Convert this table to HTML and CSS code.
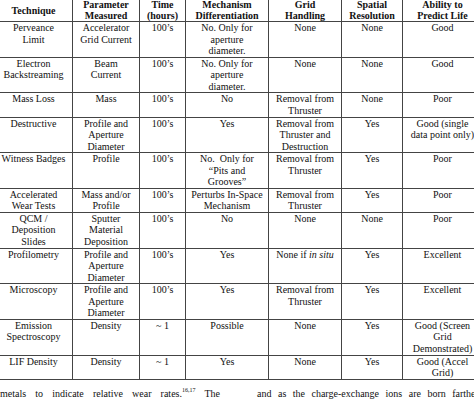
FILE: index.html
```html
<!DOCTYPE html>
<html>
<head>
<meta charset="utf-8">
<link rel="stylesheet" href="styles.css">
</head>
<body>
<div class="page">
  <table class="grid">
    <colgroup>
      <col class="c1"><col class="c2"><col class="c3"><col class="c4"><col class="c5"><col class="c6"><col class="c7">
    </colgroup>
    <thead>
      <tr>
        <th>Technique</th>
        <th>Parameter<br>Measured</th>
        <th>Time<br>(hours)</th>
        <th>Mechanism<br>Differentiation</th>
        <th>Grid<br>Handling</th>
        <th>Spatial<br>Resolution</th>
        <th>Ability to<br>Predict Life</th>
      </tr>
    </thead>
    <tbody>
      <tr>
        <td>Perveance<br>Limit</td>
        <td>Accelerator<br>Grid Current</td>
        <td>100’s</td>
        <td>No. Only for<br>aperture<br>diameter.</td>
        <td>None</td>
        <td>None</td>
        <td>Good</td>
      </tr>
      <tr>
        <td>Electron<br>Backstreaming</td>
        <td>Beam<br>Current</td>
        <td>100’s</td>
        <td>No. Only for<br>aperture<br>diameter.</td>
        <td>None</td>
        <td>None</td>
        <td>Good</td>
      </tr>
      <tr>
        <td>Mass Loss</td>
        <td>Mass</td>
        <td>100’s</td>
        <td>No</td>
        <td>Removal from<br>Thruster</td>
        <td>None</td>
        <td>Poor</td>
      </tr>
      <tr>
        <td>Destructive</td>
        <td>Profile and<br>Aperture<br>Diameter</td>
        <td>100’s</td>
        <td>Yes</td>
        <td>Removal from<br>Thruster and<br>Destruction</td>
        <td>Yes</td>
        <td>Good (single<br>data point only)</td>
      </tr>
      <tr>
        <td>Witness Badges</td>
        <td>Profile</td>
        <td>100’s</td>
        <td>No.&nbsp; Only for<br>“Pits and<br>Grooves”</td>
        <td>Removal from<br>Thruster</td>
        <td>Yes</td>
        <td>Poor</td>
      </tr>
      <tr>
        <td>Accelerated<br>Wear Tests</td>
        <td>Mass and/or<br>Profile</td>
        <td>100’s</td>
        <td>Perturbs In-Space<br>Mechanism</td>
        <td>Removal from<br>Thruster</td>
        <td>Yes</td>
        <td>Poor</td>
      </tr>
      <tr>
        <td>QCM /<br>Deposition<br>Slides</td>
        <td>Sputter<br>Material<br>Deposition</td>
        <td>100’s</td>
        <td>No</td>
        <td>None</td>
        <td>None</td>
        <td>Poor</td>
      </tr>
      <tr>
        <td>Profilometry</td>
        <td>Profile and<br>Aperture<br>Diameter</td>
        <td>100’s</td>
        <td>Yes</td>
        <td>None if <i>in situ</i></td>
        <td>Yes</td>
        <td>Excellent</td>
      </tr>
      <tr>
        <td>Microscopy</td>
        <td>Profile and<br>Aperture<br>Diameter</td>
        <td>100’s</td>
        <td>Yes</td>
        <td>Removal from<br>Thruster</td>
        <td>Yes</td>
        <td>Excellent</td>
      </tr>
      <tr>
        <td>Emission<br>Spectroscopy</td>
        <td>Density</td>
        <td>~ 1</td>
        <td>Possible</td>
        <td>None</td>
        <td>Yes</td>
        <td>Good (Screen<br>Grid<br>Demonstrated)</td>
      </tr>
      <tr>
        <td>LIF Density</td>
        <td>Density</td>
        <td>~ 1</td>
        <td>Yes</td>
        <td>None</td>
        <td>Yes</td>
        <td>Good (Accel<br>Grid)</td>
      </tr>
    </tbody>
  </table>
  <div class="text">
    <p class="col-left">metals to indicate relative wear rates.<sup>16,17</sup> The</p>
    <p class="col-right">and as the charge-exchange ions are born farther</p>
  </div>
</div>
</body>
</html>
```

FILE: styles.css
```css
html, body {
  margin: 0;
  padding: 0;
  background: #ffffff;
}

.page {
  width: 474px;
  height: 402px;
  overflow: hidden;
  font-family: "Liberation Serif", "Times New Roman", serif;
  color: #111111;
  font-size: 10px;
}

.grid {
  border-collapse: collapse;
  table-layout: fixed;
  width: 488px;
  margin-left: -6px;
  margin-top: -2px;
}

.c1 { width: 78px; }
.c2 { width: 67px; }
.c3 { width: 46px; }
.c4 { width: 83px; }
.c5 { width: 73px; }
.c6 { width: 61px; }
.c7 { width: 80px; }

.grid th,
.grid td {
  border: 1px solid #444444;
  padding: 0;
  line-height: 11.55px;
  text-align: center;
  white-space: nowrap;
  overflow: visible;
}

.grid th {
  font-weight: bold;
  vertical-align: middle;
  line-height: 11.1px;
}

.grid td {
  vertical-align: top;
}

.text {
  display: flex;
  margin-top: 8px;
  line-height: 12px;
}

.text p {
  margin: 0;
}

.col-left {
  width: 220px;
  flex: none;
  text-align: justify;
  text-align-last: justify;
}

.col-left sup {
  font-size: 6px;
  line-height: 0;
  vertical-align: 5px;
}

.col-right {
  margin-left: 37px !important;
  white-space: nowrap;
  word-spacing: 4px;
}
```
